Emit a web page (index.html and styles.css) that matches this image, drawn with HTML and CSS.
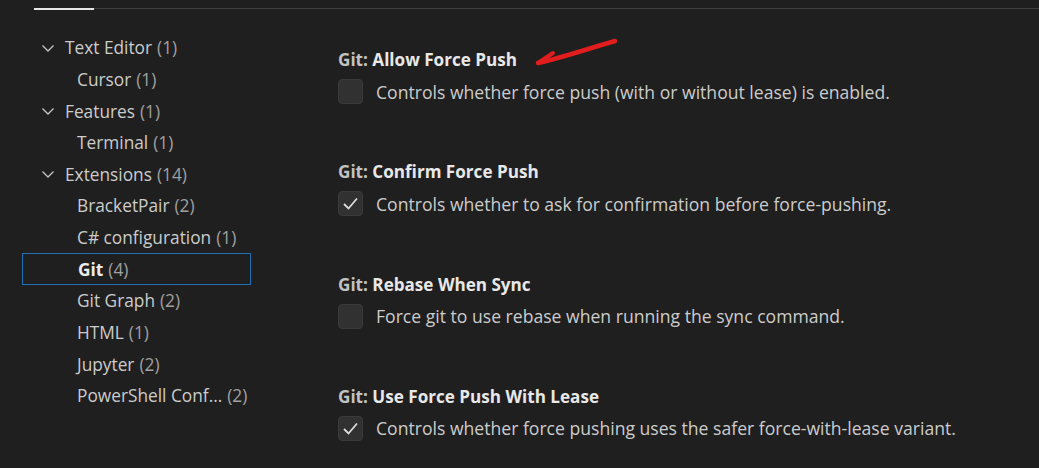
FILE: index.html
```html
<!DOCTYPE html>
<html>
<head>
<meta charset="utf-8">
<link rel="stylesheet" href="styles.css">
</head>
<body>
<div class="tabline"><div class="tab-active"></div><div class="tab-rest"></div></div>
<div class="main">
  <div class="toc">
    <div class="row top"><span class="chev"><svg width="16" height="16" viewBox="0 0 16 16"><path d="M2.5 5.5 L8 11 L13.5 5.5" fill="none" stroke="#c5c5c5" stroke-width="1.3"/></svg></span><span class="lbl">Text Editor</span><span class="cnt">(1)</span></div>
    <div class="row child"><span class="lbl">Cursor</span><span class="cnt">(1)</span></div>
    <div class="row top"><span class="chev"><svg width="16" height="16" viewBox="0 0 16 16"><path d="M2.5 5.5 L8 11 L13.5 5.5" fill="none" stroke="#c5c5c5" stroke-width="1.3"/></svg></span><span class="lbl">Features</span><span class="cnt">(1)</span></div>
    <div class="row child"><span class="lbl">Terminal</span><span class="cnt">(1)</span></div>
    <div class="row top"><span class="chev"><svg width="16" height="16" viewBox="0 0 16 16"><path d="M2.5 5.5 L8 11 L13.5 5.5" fill="none" stroke="#c5c5c5" stroke-width="1.3"/></svg></span><span class="lbl">Extensions</span><span class="cnt">(14)</span></div>
    <div class="row child"><span class="lbl">BracketPair</span><span class="cnt">(2)</span></div>
    <div class="row child"><span class="lbl">C# configuration</span><span class="cnt">(1)</span></div>
    <div class="row child selected"><span class="lbl bold">Git</span><span class="cnt">(4)</span></div>
    <div class="row child"><span class="lbl">Git Graph</span><span class="cnt">(2)</span></div>
    <div class="row child"><span class="lbl">HTML</span><span class="cnt">(1)</span></div>
    <div class="row child"><span class="lbl">Jupyter</span><span class="cnt">(2)</span></div>
    <div class="row child"><span class="lbl">PowerShell Conf...</span><span class="cnt">(2)</span></div>
  </div>
  <div class="settings">
    <div class="setting">
      <div class="title"><span class="cat">Git: </span><span class="key">Allow Force Push</span></div>
      <div class="opt"><span class="box"></span><span class="desc">Controls whether force push (with or without lease) is enabled.</span></div>
      <svg class="arrow" width="100" height="40" viewBox="0 0 100 40"><path d="M3 27 C 30 21, 55 12, 80 5" fill="none" stroke="#e11d1d" stroke-width="4.5" stroke-linecap="round"/><path d="M3 27 L 18 17" fill="none" stroke="#e11d1d" stroke-width="4" stroke-linecap="round"/></svg>
    </div>
    <div class="setting">
      <div class="title"><span class="cat">Git: </span><span class="key">Confirm Force Push</span></div>
      <div class="opt"><span class="box"><svg width="25" height="25" viewBox="0 0 25 25"><path d="M6 13 L10.5 17.5 L19 7.5" fill="none" stroke="#dcdcdc" stroke-width="1.8"/></svg></span><span class="desc">Controls whether to ask for confirmation before force-pushing.</span></div>
    </div>
    <div class="setting">
      <div class="title"><span class="cat">Git: </span><span class="key">Rebase When Sync</span></div>
      <div class="opt"><span class="box"></span><span class="desc">Force git to use rebase when running the sync command.</span></div>
    </div>
    <div class="setting last">
      <div class="title"><span class="cat">Git: </span><span class="key">Use Force Push With Lease</span></div>
      <div class="opt"><span class="box"><svg width="25" height="25" viewBox="0 0 25 25"><path d="M6 13 L10.5 17.5 L19 7.5" fill="none" stroke="#dcdcdc" stroke-width="1.8"/></svg></span><span class="desc">Controls whether force pushing uses the safer force-with-lease variant.</span></div>
    </div>
  </div>
</div>
</body>
</html>
```

FILE: styles.css
```css
html, body {
  margin: 0;
  padding: 0;
  background: #1f1f1f;
  height: 100%;
  overflow: hidden;
}
body {
  font-family: "Open Sans", "Noto Sans", sans-serif;
  color: #cccccc;
  font-size: 17.3px;
}
.tabline {
  display: flex;
  align-items: flex-start;
  margin: 8px 0 0 34px;
  height: 2px;
}
.tab-active {
  width: 60px;
  height: 2px;
  background: #e6e6e6;
}
.tab-rest {
  flex: 1;
  height: 1px;
  background: #3e3e3e;
}
.main {
  display: flex;
  margin-top: 22px;
}
.toc {
  width: 229px;
  margin-left: 22px;
  flex: none;
}
.row {
  height: 31.64px;
  display: flex;
  align-items: center;
  box-sizing: border-box;
  white-space: nowrap;
}
.row.top { padding-left: 18px; }
.row.child { padding-left: 55px; }
.chev {
  width: 16px;
  height: 16px;
  margin-right: 9px;
  display: flex;
}
.lbl { color: #cccccc; }
.lbl.bold { font-weight: 700; color: #ececec; }
.cnt { color: #a0a0a0; margin-left: 5px; }
.selected {
  border: 1px solid #1f6fb5;
  padding-left: 54px;
}
.settings {
  margin-left: 87px;
  margin-top: 16px;
}
.setting {
  position: relative;
  height: 112.3px;
}
.setting.last { height: auto; }
.title {
  height: 24px;
  line-height: 24px;
  font-weight: 700;
  font-size: 17.1px;
}
.cat { color: #c2c2c2; }
.key { color: #e8e8e8; }
.opt {
  display: flex;
  align-items: center;
  margin-top: 7px;
}
.box {
  width: 25px;
  height: 25px;
  box-sizing: border-box;
  background: #313131;
  border: 1px solid #3a3a3a;
  border-radius: 4px;
  margin-right: 13px;
  display: flex;
  flex: none;
}
.box svg { margin: -1px; }
.desc { color: #cccccc; font-size: 17.6px; }
.arrow {
  position: absolute;
  left: 197px;
  top: -12px;
}
```
